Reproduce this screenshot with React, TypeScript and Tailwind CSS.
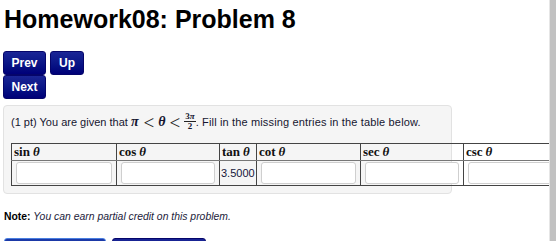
import React from "react";

const serif = { fontFamily: '"Liberation Serif", "DejaVu Serif", serif' } as const;

function Th({ fn, w }: { fn: string; w: string }) {
  return (
    <th
      className={`${w} border border-[#444] border-b-[#777] px-[2px] py-0 text-left align-middle font-normal`}
    >
      <span className="text-[13px] font-bold leading-none" style={serif}>
        {fn}
      </span>
      <span className="text-[13px] italic font-bold leading-none ml-[3px]" style={serif}>
        θ
      </span>
    </th>
  );
}

function InputCell({ w }: { w: string }) {
  return (
    <td className={`${w} border border-[#444] px-[4px] py-0 align-middle`}>
      <div className="h-[22px] w-full rounded-[3px] border border-[#cfcfcf] bg-white" />
    </td>
  );
}

export default function App() {
  return (
    <div
      className="w-[556px] h-[241px] overflow-hidden flex bg-white text-[#111]"
      style={{ fontFamily: '"Liberation Sans", Arial, sans-serif' }}
    >
      <div className="w-[549px] h-[241px] overflow-hidden shrink-0">
        <h1 className="pl-[4px] pt-[5px] text-[25px] leading-[29px] font-bold text-black">
          Homework08: Problem 8
        </h1>

        <div className="mt-[17px] ml-[3px] w-[90px] flex flex-wrap gap-x-[4px]">
          {[
            { t: "Prev", w: "w-[43px]" },
            { t: "Up", w: "w-[34px]" },
            { t: "Next", w: "w-[43px]" },
          ].map((b) => (
            <div
              key={b.t}
              className={`${b.w} h-[24px] rounded-[3px] border border-[#05056a] bg-gradient-to-b from-[#1a2596] to-[#000078] text-white text-[12px] font-bold flex items-center justify-center`}
            >
              {b.t}
            </div>
          ))}
        </div>

        <div className="mt-[6px] ml-[3px] w-[449px] rounded-[4px] border border-[#e2e2e2] bg-[#f5f5f5] pl-[7px] pt-[6px] pb-[7px]">
          <div className="text-[11px] leading-[20px] h-[20px] flex items-center whitespace-nowrap text-[#151530]">
            <span>(1 pt) You are given that&nbsp;</span>
            <span className="text-[14px] italic font-bold leading-none" style={serif}>π</span>
            <span className="text-[19px] leading-none ml-[5px] mr-[4px] text-[#222]" style={serif}>&lt;</span>
            <span className="text-[14px] italic font-bold leading-none" style={serif}>θ</span>
            <span className="text-[19px] leading-none ml-[4px] mr-[4px] text-[#222]" style={serif}>&lt;</span>
            <span className="inline-flex flex-col items-center leading-none mb-[2px]" style={serif}>
              <span className="text-[9px] font-bold px-[1px]">
                3<span className="italic">π</span>
              </span>
              <span className="h-px w-full bg-[#222]" />
              <span className="text-[9px] font-bold">2</span>
            </span>
            <span className="tracking-[0.15px]">. Fill in the missing entries in the table below.</span>
          </div>

          <table className="mt-[11px] border-collapse border border-[#333] table-fixed w-[620px] text-[11px] leading-[13px]">
            <thead>
              <tr className="h-[17px]">
                <Th fn="sin" w="w-[105px]" />
                <Th fn="cos" w="w-[103px]" />
                <Th fn="tan" w="w-[37px]" />
                <Th fn="cot" w="w-[104px]" />
                <Th fn="sec" w="w-[103px]" />
                <Th fn="csc" w="w-[168px]" />
              </tr>
            </thead>
            <tbody>
              <tr className="h-[25px]">
                <InputCell w="w-[105px]" />
                <InputCell w="w-[103px]" />
                <td className="w-[37px] border border-[#444] px-[1px] py-0 text-[11px] text-[#15153a] align-middle">
                  3.5000
                </td>
                <InputCell w="w-[104px]" />
                <InputCell w="w-[103px]" />
                <InputCell w="w-[168px]" />
              </tr>
            </tbody>
          </table>
        </div>

        <div className="mt-[16px] ml-[4px] text-[10.4px] leading-[14px] whitespace-nowrap">
          <span className="font-bold text-black">Note:</span>
          <span className="italic text-[#1b1b3a]"> You can earn partial credit on this problem.</span>
        </div>

        <div className="mt-[14px] ml-[4px] flex gap-[6px]">
          <div className="w-[102px] h-[24px] rounded-[3px] border border-[#4a7fe0] bg-gradient-to-b from-[#1d3aa8] to-[#001a90]" />
          <div className="w-[94px] h-[24px] rounded-[3px] border border-[#05056a] bg-gradient-to-b from-[#1a2596] to-[#000078]" />
        </div>
      </div>
      <div className="w-[7px] h-[241px] border-l border-[#e6e6e6] bg-[#c1c1c1] shrink-0" />
    </div>
  );
}
